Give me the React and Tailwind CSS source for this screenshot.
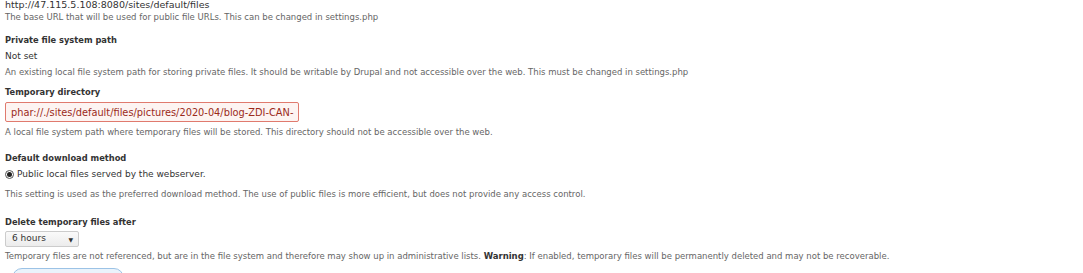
import { useState } from 'react';

const font = { fontFamily: '"DejaVu Sans", Verdana, sans-serif' };

const Label = ({ children, className = '' }) => (
  <div className={`text-[8.3px] leading-[12px] font-bold text-[#333] ${className}`}>{children}</div>
);

const Desc = ({ children, className = '' }) => (
  <div className={`text-[8.5px] leading-[10px] text-[#666] ${className}`}>{children}</div>
);

export default function App() {
  const [tmp, setTmp] = useState('phar://./sites/default/files/pictures/2020-04/blog-ZDI-CAN-');

  return (
    <div className="w-[1083px] h-[273px] overflow-hidden bg-white px-[5px]" style={font}>
      {/* Public file base URL */}
      <div className="-mt-[1px] text-[9.5px] leading-[11px] text-[#333]">http://47.115.5.108:8080/sites/default/files</div>
      <Desc className="mt-[2px]">The base URL that will be used for public file URLs. This can be changed in settings.php</Desc>

      {/* Private path */}
      <Label className="mt-[12px]">Private file system path</Label>
      <div className="mt-[4px] text-[9px] leading-[12px] text-[#333]">Not set</div>
      <Desc className="mt-[5px]">
        An existing local file system path for storing private files. It should be writable by Drupal and not accessible over the web. This must be changed in settings.php
      </Desc>

      {/* Temporary directory */}
      <Label className="mt-[9px]">Temporary directory</Label>
      <input
        value={tmp}
        onChange={(e) => setTmp(e.target.value)}
        className="mt-[4px] block w-[294px] h-[20px] pl-[5px] pr-[2px] border border-[#e07a6e] rounded-[2px] bg-[#fdf4f2] text-[9.8px] text-[#9b2a1a] outline-none"
        style={font}
      />
      <Desc className="mt-[5px]">
        A local file system path where temporary files will be stored. This directory should not be accessible over the web.
      </Desc>

      {/* Download method */}
      <Label className="mt-[15px]">Default download method</Label>
      <label className="mt-[4px] flex items-center gap-[3px] text-[9px] leading-[12px] text-[#333]">
        <span className="flex items-center justify-center w-[9px] h-[9px] rounded-full border border-[#555] bg-white">
          <span className="w-[5px] h-[5px] rounded-full bg-[#222]" />
        </span>
        Public local files served by the webserver.
      </label>
      <Desc className="mt-[9px] text-[7.65px]">
        This setting is used as the preferred download method. The use of public files is more efficient, but does not provide any access control.
      </Desc>

      {/* Delete temporary files */}
      <Label className="mt-[17px]">Delete temporary files after</Label>
      <div className="mt-[3px] flex items-center justify-between w-[74px] h-[16px] pl-[6px] pr-[5px] border border-[#ccc] rounded-[2px] bg-gradient-to-b from-[#fafafa] to-[#ececec] text-[9px] text-[#333]">
        <span>6 hours</span>
        <span className="text-[6px]">▼</span>
      </div>
      <Desc className="mt-[4px]">
        Temporary files are not referenced, but are in the file system and therefore may show up in administrative lists. <b className="text-[#333]">Warning</b>: If enabled, temporary files will be permanently deleted and may not be recoverable.
      </Desc>

      <div className="mt-[7px] ml-[7px] w-[112px] h-[20px] rounded-[10px] border border-[#9cc3e6] bg-[#eaf3fb]" />
    </div>
  );
}
